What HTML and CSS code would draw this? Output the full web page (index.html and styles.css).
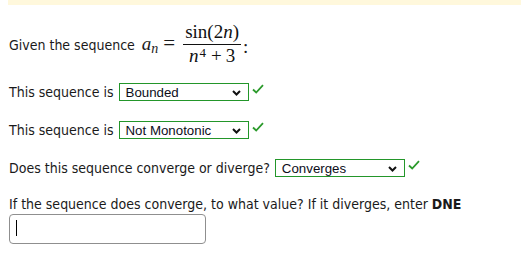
FILE: index.html
```html
<!DOCTYPE html>
<html>
<head>
<meta charset="utf-8">
<link rel="stylesheet" href="styles.css">
</head>
<body>
<div class="banner"></div>
<div class="content">
  <div class="row row-eq">
    <span class="lead">Given the sequence <span class="mi">a</span><span class="msub">n</span><span class="mo">=</span></span>
    <span class="frac">
      <span class="num">sin(2<span class="mi">n</span>)</span>
      <span class="den"><span class="mi">n</span><span class="msup">4</span><span class="plus">+</span>3</span>
    </span>
    <span class="colon">:</span>
  </div>

  <div class="row row-q">
    <span class="label">This sequence is</span>
    <span class="select">Bounded<svg class="chev" viewBox="0 0 9 6" width="9" height="6"><path d="M1 1 L4.5 4.5 L8 1" fill="none" stroke="#111" stroke-width="2"/></svg></span>
    <svg class="check" viewBox="0 0 12 10" width="12" height="10"><path d="M1 5.5 L4.2 8.5 L11 1.2" fill="none" stroke="#2b9a2b" stroke-width="1.8"/></svg>
  </div>

  <div class="row row-q">
    <span class="label">This sequence is</span>
    <span class="select">Not Monotonic<svg class="chev" viewBox="0 0 9 6" width="9" height="6"><path d="M1 1 L4.5 4.5 L8 1" fill="none" stroke="#111" stroke-width="2"/></svg></span>
    <svg class="check" viewBox="0 0 12 10" width="12" height="10"><path d="M1 5.5 L4.2 8.5 L11 1.2" fill="none" stroke="#2b9a2b" stroke-width="1.8"/></svg>
  </div>

  <div class="row row-q">
    <span class="label">Does this sequence converge or diverge?</span>
    <span class="select">Converges<svg class="chev" viewBox="0 0 9 6" width="9" height="6"><path d="M1 1 L4.5 4.5 L8 1" fill="none" stroke="#111" stroke-width="2"/></svg></span>
    <svg class="check" viewBox="0 0 12 10" width="12" height="10"><path d="M1 5.5 L4.2 8.5 L11 1.2" fill="none" stroke="#2b9a2b" stroke-width="1.8"/></svg>
  </div>

  <div class="final">
    <div class="prompt">If the sequence does converge, to what value? If it diverges, enter <b>DNE</b></div>
    <div class="answer">
      <input class="field" type="text" aria-label="answer">
      <span class="caret"></span>
    </div>
  </div>
</div>
</body>
</html>
```
FILE: styles.css
```css
html, body { background: #fff; }
body {
  margin: 0 0 0 8px;
  font-family: "DejaVu Sans Condensed", "DejaVu Sans", sans-serif;
  font-size: 14px;
  color: #1a1a1a;
}
.banner {
  height: 5px;
  background: #fff8dc;
}
.content {
  padding-left: 1px;
}
.row {
  display: flex;
  align-items: center;
}
.row-eq {
  margin-top: 16px;
  height: 46px;
}
.lead {
  line-height: 17px;
  white-space: pre;
}
.mi {
  font-family: "Liberation Serif", serif;
  font-style: italic;
  font-size: 19px;
}
.lead .mi { margin-left: 3px; }
.msub {
  font-family: "Liberation Serif", serif;
  font-style: italic;
  font-size: 14px;
  position: relative;
  top: 3px;
}
.mo {
  font-family: "Liberation Serif", serif;
  font-size: 21px;
  margin: 0 7px 0 5px;
}
.frac {
  display: inline-flex;
  flex-direction: column;
  align-items: center;
  margin-left: 1px;
  font-family: "Liberation Serif", serif;
  font-size: 19px;
  color: #111;
}
.num {
  line-height: 20px;
  padding: 0 2px 2px;
  border-bottom: 1.3px solid #111;
}
.den {
  line-height: 18px;
  padding: 2px 4px 0;
}
.den .mi { font-size: 19px; }
.msup {
  font-size: 13px;
  position: relative;
  top: -5px;
  margin-left: 1px;
}
.plus {
  margin: 0 4px 0 5px;
}
.colon {
  font-family: "Liberation Serif", serif;
  font-size: 19px;
  line-height: 20px;
  margin-left: 2px;
  margin-top: 6px;
}
.row-q {
  height: 18px;
  margin-top: 20px;
}
.row-eq + .row-q {
  margin-top: 16px;
}
.label {
  line-height: 17px;
  margin-right: 5px;
}
.select {
  box-sizing: border-box;
  width: 130px;
  height: 18px;
  border: 1px solid #23962a;
  display: flex;
  align-items: center;
  justify-content: space-between;
  padding: 0 7px 0 6px;
  font-family: "Liberation Sans", Arial, sans-serif;
  font-size: 13.3px;
  color: #0d0d1a;
}
.chev {
  display: block;
  margin-top: 1px;
}
.check {
  display: block;
  align-self: flex-start;
  margin-left: 3px;
  margin-top: 1px;
}
.final {
  margin-top: 19px;
}
.prompt {
  line-height: 17px;
}
.prompt b { font-weight: bold; }
.answer {
  position: relative;
  width: 197px;
  height: 30px;
  margin-top: 1px;
}
.field {
  box-sizing: border-box;
  display: block;
  width: 197px;
  height: 30px;
  margin: 0;
  border: 1px solid #8f8f8f;
  border-radius: 4px;
  background: #fff;
  padding: 0 7px;
  font: inherit;
}
.caret {
  position: absolute;
  left: 7px;
  top: 6px;
  width: 1.3px;
  height: 16px;
  background: #000;
}
```
